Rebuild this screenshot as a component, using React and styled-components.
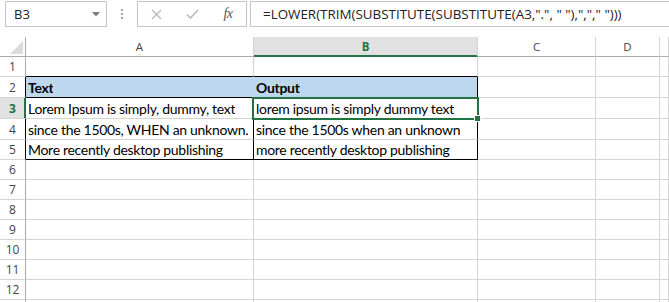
import React from "react";
import styled, { createGlobalStyle } from "styled-components";

const GREEN = "#217346";
const GRID = "#d4d4d4";
const HEAD_LINE = "#ababab";
const BLUE = "#bdd7ee";

const Global = createGlobalStyle`
    html, body {
        margin: 0;
        padding: 0;
        background: #ffffff;
        overflow: hidden;
    }
`;

const Window = styled.div`
    width: 669px;
    height: 302px;
    overflow: hidden;
    background: #ffffff;
    font-family: "Open Sans", "Noto Sans", sans-serif;
`;

const FormulaBar = styled.div`
    display: flex;
    align-items: flex-start;
    height: 37px;
    padding: 1px 0 0 5px;
    box-sizing: border-box;
`;

const NameBox = styled.div`
    display: flex;
    align-items: center;
    justify-content: space-between;
    width: 102px;
    height: 26px;
    box-sizing: border-box;
    border: 1px solid #c6c6c6;
    padding: 0 6px 0 8px;
    font-size: 13px;
    color: #222;
`;

const Grip = styled.div`
    display: flex;
    flex-direction: column;
    gap: 2px;
    width: 30px;
    align-items: center;
    padding-top: 8px;

    span {
        width: 2px;
        height: 2px;
        background: #a6a6a6;
    }
`;

const Tools = styled.div`
    display: flex;
    align-items: center;
    width: 110px;
    height: 26px;
    box-sizing: border-box;
    border: 1px solid #c6c6c6;
`;

const ToolSlot = styled.div`
    width: 38px;
    display: flex;
    justify-content: center;
    align-items: center;
`;

const Fx = styled.span`
    font-family: "Liberation Serif", "DejaVu Serif", serif;
    font-style: italic;
    font-size: 14px;
    color: #555;
    letter-spacing: -0.5px;
`;

const FormulaInput = styled.div`
    flex: 1;
    height: 26px;
    margin-left: 3px;
    box-sizing: border-box;
    border: 1px solid #c6c6c6;
    border-right: none;
    display: flex;
    align-items: center;
    padding-left: 12px;
    font-size: 13.4px;
    color: #222;
    white-space: nowrap;
`;

const Sheet = styled.div`
    display: grid;
    grid-template-columns: 26px 228px 224px 118px 64px 1fr;
    grid-template-rows: 20px 20px 21px 21px 21px 20px repeat(8, 20px);
`;

const Corner = styled.div`
    border-right: 1px solid ${HEAD_LINE};
    border-bottom: 1px solid ${HEAD_LINE};
    display: flex;
    justify-content: flex-end;
    align-items: flex-end;
    padding: 0 2px 2px 0;
`;

const ColHead = styled.div`
    display: flex;
    align-items: center;
    justify-content: center;
    border-right: 1px solid ${GRID};
    border-bottom: 1px solid ${(p) => (p.$active ? GREEN : HEAD_LINE)};
    box-shadow: ${(p) => (p.$active ? `inset 0 -1px 0 ${GREEN}` : "none")};
    background: ${(p) => (p.$active ? "#e1e1e1" : "#ffffff")};
    color: ${(p) => (p.$active ? GREEN : "#444")};
    font-weight: ${(p) => (p.$active ? 700 : 400)};
    font-size: 11.5px;
`;

const RowHead = styled.div`
    display: flex;
    align-items: center;
    justify-content: center;
    border-right: 1px solid ${(p) => p.$edge};
    border-bottom: 1px solid ${GRID};
    box-shadow: ${(p) => (p.$active ? `inset -1px 0 0 ${GREEN}` : "none")};
    background: ${(p) => (p.$active ? "#e1e1e1" : "#ffffff")};
    color: ${(p) => (p.$active ? GREEN : "#444")};
    font-weight: ${(p) => (p.$active ? 700 : 400)};
    font-size: 12px;
`;

const Cell = styled.div`
    position: relative;
    display: flex;
    align-items: flex-end;
    min-width: 0;
    padding: 0 0 1px 2px;
    border-right: 1px solid ${(p) => p.$right || GRID};
    border-bottom: 1px solid ${(p) => p.$bottom || GRID};
    background: ${(p) => p.$fill || "transparent"};
    font-family: "Lato", "Carlito", sans-serif;
    font-size: 14px;
    letter-spacing: -0.3px;
    line-height: 17px;
    font-weight: ${(p) => (p.$bold ? 700 : 400)};
    color: #000;
`;

const Value = styled.span`
    display: block;
    overflow: hidden;
    white-space: nowrap;
`;

const Selection = styled.div`
    position: absolute;
    top: -1px;
    left: -2px;
    right: -2px;
    bottom: -2px;
    border: 2px solid ${GREEN};
    pointer-events: none;
    z-index: 2;
`;

const Handle = styled.div`
    position: absolute;
    right: -4px;
    bottom: -4px;
    width: 5px;
    height: 5px;
    background: ${GREEN};
    border: 1px solid #fff;
`;

const data = {
    2: ["Text", "Output"],
    3: ["Lorem Ipsum is simply, dummy, text", "lorem ipsum is simply dummy text"],
    4: ["since the 1500s, WHEN an unknown.", "since the 1500s when an unknown"],
    5: ["More recently desktop publishing", "more recently desktop publishing"],
};

const columns = ["A", "B", "C", "D", ""];
const rowNums = [1, 2, 3, 4, 5, 6, 7, 8, 9, 10, 11, 12, 13];

function tableBorders(r, c) {
    // table A2:B5 with black outline
    if (c > 1) return {};
    const b = {};
    if (r === 1) b.$bottom = "#000";
    if (r === 2) {
        b.$bottom = "#000";
        b.$fill = BLUE;
        b.$bold = true;
        b.$right = c === 0 ? BLUE : "#000";
    }
    if (r >= 3 && r <= 5) {
        b.$right = "#000";
        if (r === 5) b.$bottom = "#000";
    }
    return b;
}

function rowEdge(r) {
    if (r === 3) return GREEN;
    if (r >= 2 && r <= 5) return "#000";
    return HEAD_LINE;
}

export default function App() {
    return (
        <Window>
            <Global />
            <FormulaBar>
                <NameBox>
                    <span>B3</span>
                    <svg width="8" height="5" viewBox="0 0 8 5">
                        <path d="M0 0 H8 L4 4.5 Z" fill="#7a7a7a" />
                    </svg>
                </NameBox>
                <Grip>
                    <span />
                    <span />
                    <span />
                </Grip>
                <Tools>
                    <ToolSlot>
                        <svg width="11" height="11" viewBox="0 0 11 11">
                            <path d="M1 1 L10 10 M10 1 L1 10" stroke="#b8b8b8" strokeWidth="1.3" fill="none" />
                        </svg>
                    </ToolSlot>
                    <ToolSlot>
                        <svg width="13" height="10" viewBox="0 0 13 10">
                            <path d="M1 5.5 L4.5 9 L12 1" stroke="#b8b8b8" strokeWidth="1.6" fill="none" />
                        </svg>
                    </ToolSlot>
                    <ToolSlot>
                        <Fx>fx</Fx>
                    </ToolSlot>
                </Tools>
                <FormulaInput>=LOWER(TRIM(SUBSTITUTE(SUBSTITUTE(A3,".", " "),","," ")))</FormulaInput>
            </FormulaBar>
            <Sheet>
                <Corner>
                    <svg width="13" height="13" viewBox="0 0 13 13">
                        <path d="M13 0 V13 H0 Z" fill="#dcdcdc" />
                    </svg>
                </Corner>
                {columns.map((c) => (
                    <ColHead key={c || "E"} $active={c === "B"}>
                        {c}
                    </ColHead>
                ))}
                {rowNums.map((r) => (
                    <React.Fragment key={r}>
                        <RowHead $active={r === 3} $edge={rowEdge(r)}>
                            {r < 13 ? r : null}
                        </RowHead>
                        {columns.map((c, ci) => (
                            <Cell key={ci} {...tableBorders(r, ci)}>
                                {data[r] && ci < 2 && <Value>{data[r][ci]}</Value>}
                                {r === 3 && ci === 1 && (
                                    <Selection>
                                        <Handle />
                                    </Selection>
                                )}
                            </Cell>
                        ))}
                    </React.Fragment>
                ))}
            </Sheet>
        </Window>
    );
}
